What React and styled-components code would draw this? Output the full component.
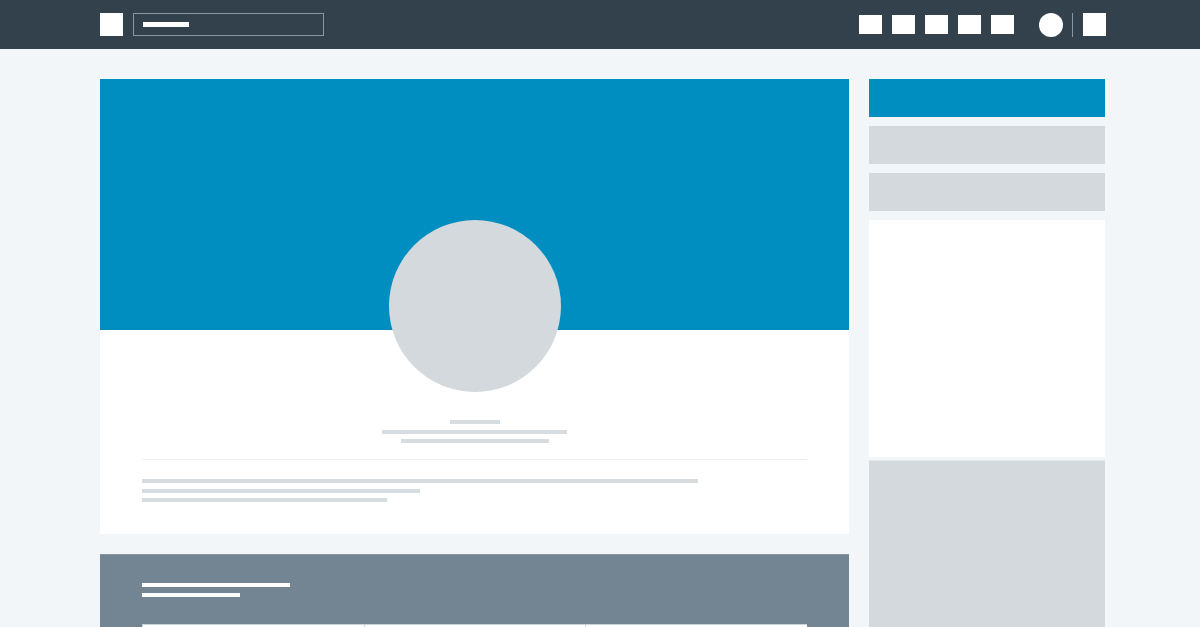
import React from 'react'
import styled, { createGlobalStyle } from 'styled-components'

const GlobalStyle = createGlobalStyle`
  * { box-sizing: border-box; }
  html, body {
    margin: 0;
    padding: 0;
    background: #f3f6f8;
    font-family: "Liberation Sans", Arial, sans-serif;
    overflow: hidden;
  }
`

const Page = styled.div`
  width: 1200px;
  height: 627px;
  overflow: hidden;
  background: #f3f6f8;
`

const TopBar = styled.header`
  height: 49px;
  background: #33414d;
  display: flex;
  align-items: center;
  justify-content: space-between;
  padding: 0 94px 0 100px;
`

const Left = styled.div`
  display: flex;
  align-items: center;
  gap: 10px;
`

const Logo = styled.div`
  width: 23px;
  height: 23px;
  background: #fff;
`

const Search = styled.div`
  width: 191px;
  height: 23px;
  border: 1px solid #8c979f;
  display: flex;
  align-items: center;
  padding-left: 9px;
`

const SearchText = styled.div`
  width: 46px;
  height: 5px;
  background: #fff;
`

const Nav = styled.nav`
  display: flex;
  align-items: center;
`

const NavItem = styled.div`
  width: 23px;
  height: 19px;
  background: #fff;
  margin-right: 10px;
`

const Me = styled.div`
  width: 24px;
  height: 24px;
  border-radius: 50%;
  background: #fff;
  margin-left: 15px;
`

const Sep = styled.div`
  width: 1px;
  height: 24px;
  background: #8c979f;
  margin: 0 10px 0 9px;
`

const Work = styled.div`
  width: 23px;
  height: 23px;
  background: #fff;
`

const Body = styled.main`
  display: flex;
  gap: 20px;
  padding: 30px 0 0 100px;
`

const MainCol = styled.div`
  width: 749px;
  display: flex;
  flex-direction: column;
  gap: 20px;
`

const Card = styled.section`
  background: #fff;
  padding-bottom: 32px;
`

const Cover = styled.div`
  height: 251px;
  background: #008dc0;
`

const Avatar = styled.div`
  width: 172px;
  height: 172px;
  border-radius: 50%;
  background: #d3d9dc;
  margin: -110px auto 0;
  position: relative;
`

const Lines = styled.div`
  display: flex;
  flex-direction: column;
  align-items: ${p => (p.$center ? 'center' : 'flex-start')};
  gap: 5.5px;
  padding: 0 ${p => (p.$flush ? 0 : 42)}px;
  margin-top: ${p => p.$top}px;
`

const Line = styled.div`
  width: ${p => p.$w}px;
  height: 4px;
  background: ${p => (p.$light ? '#ffffff' : '#d6dce0')};
`

const Divider = styled.hr`
  border: none;
  height: 1px;
  background: #eef1f3;
  margin: 16px 42px 0;
`

const SlateCard = styled.section`
  background: #738593;
  border-top: 1px solid #8595a1;
  padding: 28px 42px 0;
  height: 120px;
`

const Table = styled.div`
  display: grid;
  grid-template-columns: 221px 220px 221px;
  gap: 1px;
  margin-top: 27px;
  background: #c9d1d6;
  border: 1px solid #c9d1d6;
  width: 665px;
`

const Cell = styled.div`
  height: 40px;
  background: #fff;
`

const Side = styled.aside`
  width: 236px;
  display: flex;
  flex-direction: column;
`

const SideBar = styled.div`
  height: 38px;
  background: ${p => (p.$blue ? '#008dc0' : '#d3d9dc')};
  margin-bottom: 9px;
`

const SideBox = styled.div`
  height: 237px;
  background: #fff;
`

const SideAd = styled.div`
  height: 200px;
  background: #d3d9dc;
  border-top: 1px solid #e3e8eb;
  margin-top: 3px;
`

export default function App() {
  return (
    <Page>
      <GlobalStyle />
      <TopBar>
        <Left>
          <Logo />
          <Search>
            <SearchText />
          </Search>
        </Left>
        <Nav>
          {[0, 1, 2, 3, 4].map(i => <NavItem key={i} />)}
          <Me />
          <Sep />
          <Work />
        </Nav>
      </TopBar>
      <Body>
        <MainCol>
          <Card>
            <Cover />
            <Avatar />
            <Lines $center $top={28}>
              <Line $w={50} />
              <Line $w={185} />
              <Line $w={148} />
            </Lines>
            <Divider />
            <Lines $top={19}>
              <Line $w={556} />
              <Line $w={278} />
              <Line $w={245} />
            </Lines>
          </Card>
          <SlateCard>
            <Lines $flush $top={0}>
              <Line $light $w={148} />
              <Line $light $w={98} />
            </Lines>
            <Table>
              <Cell />
              <Cell />
              <Cell />
            </Table>
          </SlateCard>
        </MainCol>
        <Side>
          <SideBar $blue />
          <SideBar />
          <SideBar />
          <SideBox />
          <SideAd />
        </Side>
      </Body>
    </Page>
  )
}
